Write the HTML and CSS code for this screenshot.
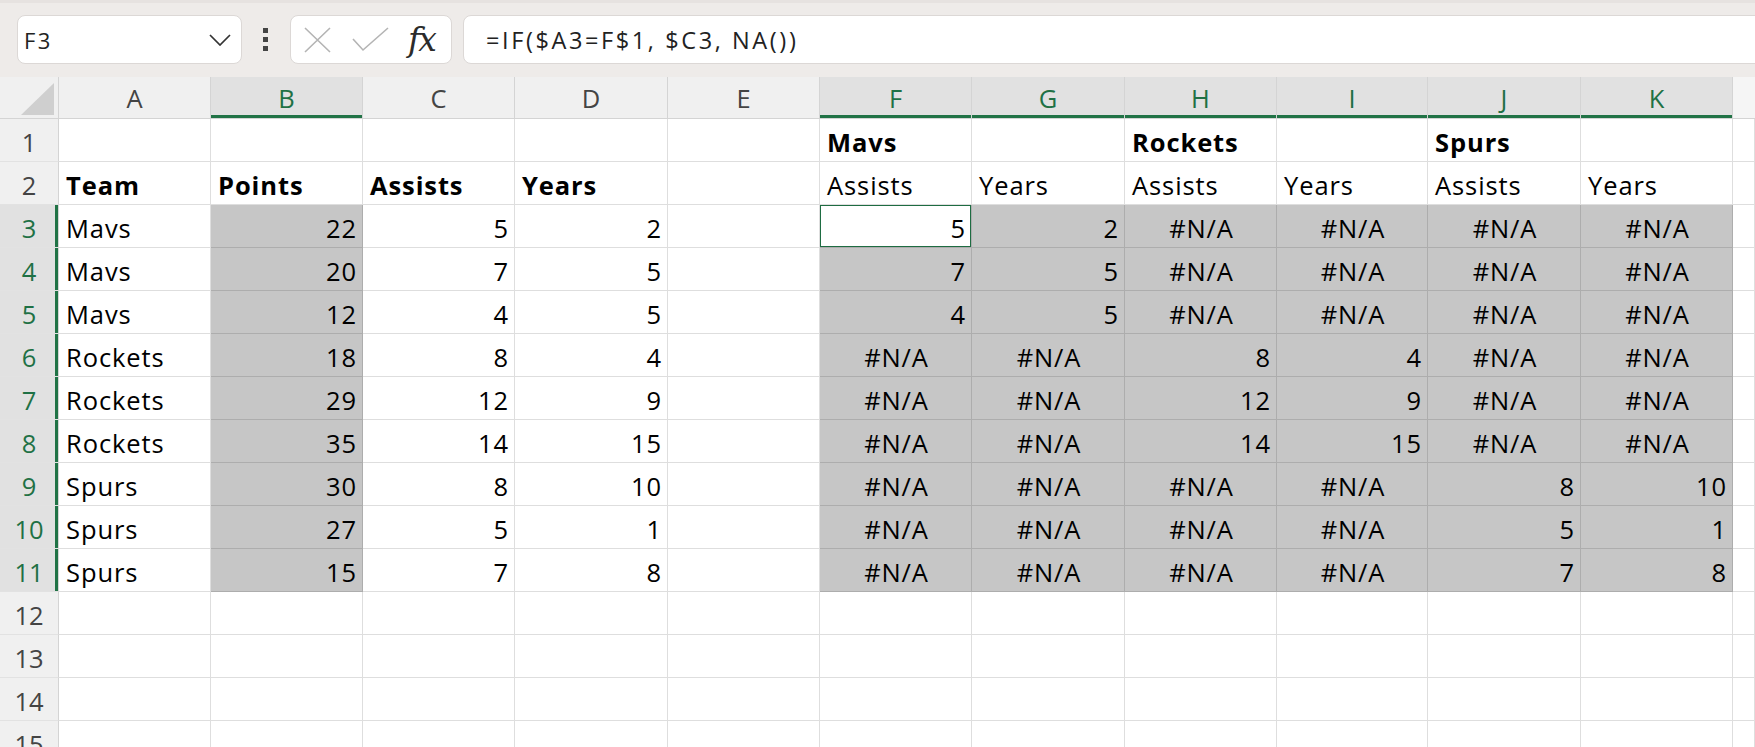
FILE: index.html
```html
<!DOCTYPE html>
<html lang="en">
<head>
    <meta charset="UTF-8">
    <title>Book1 - Excel</title>
    <link rel="stylesheet" href="styles.css">
</head>
<body>

    <!-- Formula bar -->
    <div class="toolbar">
        <div class="name-box">
            <span>F3</span>
            <svg class="chevron" width="22" height="12" viewBox="0 0 22 12">
                <polyline points="1,1 11,11 21,1" fill="none" stroke="#333" stroke-width="1.7"/>
            </svg>
        </div>
        <svg class="grip" width="6" height="24" viewBox="0 0 6 24">
            <rect x="0" y="0" width="5" height="5" fill="#444"/>
            <rect x="0" y="9" width="5" height="5" fill="#444"/>
            <rect x="0" y="18" width="5" height="5" fill="#444"/>
        </svg>
        <div class="fx-box">
            <svg width="27" height="26" viewBox="0 0 27 26">
                <path d="M1 1 L26 25 M26 1 L1 25" stroke="#b4b4b4" stroke-width="1.6" fill="none"/>
            </svg>
            <svg width="37" height="25" viewBox="0 0 37 25">
                <polyline points="1,12 11,23 36,1" fill="none" stroke="#b4b4b4" stroke-width="1.6"/>
            </svg>
            <span class="fx">fx</span>
        </div>
        <div class="formula">=IF($A3=F$1, $C3, NA())</div>
    </div>

    <!-- Sheet -->
    <table class="sheet">
        <colgroup>
            <col style="width:59px">
            <col style="width:152px">
            <col style="width:152px">
            <col style="width:152px">
            <col style="width:153px">
            <col style="width:152px">
            <col style="width:152px">
            <col style="width:153px">
            <col style="width:152px">
            <col style="width:151px">
            <col style="width:153px">
            <col style="width:152px">
            <col>
        </colgroup>
        <thead>
            <tr class="head">
                <th class="corner">
                    <svg width="36" height="34" viewBox="0 0 36 34"><polygon points="2,33 35,33 35,1" fill="#cfcfcf"/></svg>
                </th>
                <th>A</th>
                <th class="on">B</th>
                <th>C</th>
                <th>D</th>
                <th>E</th>
                <th class="on">F</th>
                <th class="on">G</th>
                <th class="on">H</th>
                <th class="on">I</th>
                <th class="on">J</th>
                <th class="on">K</th>
                <th class="rest"></th>
            </tr>
        </thead>
        <tbody>
            <tr>
                <th>1</th>
                <td></td><td></td><td></td><td></td><td></td>
                <td class="b">Mavs</td><td></td>
                <td class="b">Rockets</td><td></td>
                <td class="b">Spurs</td><td></td><td></td>
            </tr>
            <tr>
                <th>2</th>
                <td class="b">Team</td><td class="b">Points</td><td class="b">Assists</td><td class="b">Years</td><td></td>
                <td>Assists</td><td>Years</td><td>Assists</td><td>Years</td><td>Assists</td><td>Years</td><td></td>
            </tr>
            <tr>
                <th class="on">3</th>
                <td>Mavs</td><td class="n sel">22</td><td class="n">5</td><td class="n">2</td><td></td>
                <td class="n active">5</td><td class="n sel">2</td><td class="na sel">#N/A</td><td class="na sel">#N/A</td><td class="na sel">#N/A</td><td class="na sel">#N/A</td><td></td>
            </tr>
            <tr>
                <th class="on">4</th>
                <td>Mavs</td><td class="n sel">20</td><td class="n">7</td><td class="n">5</td><td></td>
                <td class="n sel">7</td><td class="n sel">5</td><td class="na sel">#N/A</td><td class="na sel">#N/A</td><td class="na sel">#N/A</td><td class="na sel">#N/A</td><td></td>
            </tr>
            <tr>
                <th class="on">5</th>
                <td>Mavs</td><td class="n sel">12</td><td class="n">4</td><td class="n">5</td><td></td>
                <td class="n sel">4</td><td class="n sel">5</td><td class="na sel">#N/A</td><td class="na sel">#N/A</td><td class="na sel">#N/A</td><td class="na sel">#N/A</td><td></td>
            </tr>
            <tr>
                <th class="on">6</th>
                <td>Rockets</td><td class="n sel">18</td><td class="n">8</td><td class="n">4</td><td></td>
                <td class="na sel">#N/A</td><td class="na sel">#N/A</td><td class="n sel">8</td><td class="n sel">4</td><td class="na sel">#N/A</td><td class="na sel">#N/A</td><td></td>
            </tr>
            <tr>
                <th class="on">7</th>
                <td>Rockets</td><td class="n sel">29</td><td class="n">12</td><td class="n">9</td><td></td>
                <td class="na sel">#N/A</td><td class="na sel">#N/A</td><td class="n sel">12</td><td class="n sel">9</td><td class="na sel">#N/A</td><td class="na sel">#N/A</td><td></td>
            </tr>
            <tr>
                <th class="on">8</th>
                <td>Rockets</td><td class="n sel">35</td><td class="n">14</td><td class="n">15</td><td></td>
                <td class="na sel">#N/A</td><td class="na sel">#N/A</td><td class="n sel">14</td><td class="n sel">15</td><td class="na sel">#N/A</td><td class="na sel">#N/A</td><td></td>
            </tr>
            <tr>
                <th class="on">9</th>
                <td>Spurs</td><td class="n sel">30</td><td class="n">8</td><td class="n">10</td><td></td>
                <td class="na sel">#N/A</td><td class="na sel">#N/A</td><td class="na sel">#N/A</td><td class="na sel">#N/A</td><td class="n sel">8</td><td class="n sel">10</td><td></td>
            </tr>
            <tr>
                <th class="on">10</th>
                <td>Spurs</td><td class="n sel">27</td><td class="n">5</td><td class="n">1</td><td></td>
                <td class="na sel">#N/A</td><td class="na sel">#N/A</td><td class="na sel">#N/A</td><td class="na sel">#N/A</td><td class="n sel">5</td><td class="n sel">1</td><td></td>
            </tr>
            <tr>
                <th class="on">11</th>
                <td>Spurs</td><td class="n sel">15</td><td class="n">7</td><td class="n">8</td><td></td>
                <td class="na sel">#N/A</td><td class="na sel">#N/A</td><td class="na sel">#N/A</td><td class="na sel">#N/A</td><td class="n sel">7</td><td class="n sel">8</td><td></td>
            </tr>
            <tr>
                <th>12</th>
                <td></td><td></td><td></td><td></td><td></td><td></td><td></td><td></td><td></td><td></td><td></td><td></td>
            </tr>
            <tr>
                <th>13</th>
                <td></td><td></td><td></td><td></td><td></td><td></td><td></td><td></td><td></td><td></td><td></td><td></td>
            </tr>
            <tr>
                <th>14</th>
                <td></td><td></td><td></td><td></td><td></td><td></td><td></td><td></td><td></td><td></td><td></td><td></td>
            </tr>
            <tr>
                <th>15</th>
                <td></td><td></td><td></td><td></td><td></td><td></td><td></td><td></td><td></td><td></td><td></td><td></td>
            </tr>
        </tbody>
    </table>

</body>
</html>
```

FILE: styles.css
```css
* {
    margin: 0;
    padding: 0;
    box-sizing: border-box;
}

body {
    width: 1755px;
    height: 747px;
    overflow: hidden;
    background: #fff;
    font-family: "Open Sans", "Noto Sans", sans-serif;
    color: #000;
}

/* Formula bar */
.toolbar {
    height: 77px;
    background: #eeebe9;
    border-top: 3px solid #e6e2e0;
    display: flex;
    align-items: center;
    padding-left: 17px;
    padding-bottom: 1px;
}

.name-box {
    width: 225px;
    height: 49px;
    background: #fff;
    border: 1px solid #dcd8d6;
    border-radius: 8px;
    display: flex;
    align-items: center;
    justify-content: space-between;
    padding: 0 10px 0 6px;
    font-size: 22px;
    letter-spacing: 2.5px;
    color: #222;
}

.grip {
    margin: 0 21px 0 21px;
}

.fx-box {
    width: 162px;
    height: 49px;
    background: #fff;
    border: 1px solid #dcd8d6;
    border-radius: 8px;
    display: flex;
    align-items: center;
    padding-left: 13px;
    gap: 21px;
}

.fx {
    font-family: "DejaVu Serif", "Liberation Serif", serif;
    font-style: italic;
    font-size: 33px;
    line-height: 1;
    color: #2b2b2b;
    margin-left: -2px;
    letter-spacing: -2px;
}

.formula {
    flex: 1;
    height: 49px;
    margin-left: 11px;
    margin-right: -12px;
    background: #fff;
    border: 1px solid #dcd8d6;
    border-radius: 8px 0 0 8px;
    display: flex;
    align-items: center;
    padding-left: 22px;
    font-size: 23.5px;
    letter-spacing: 2.6px;
    color: #222;
}

/* Sheet grid */
.sheet {
    width: 1755px;
    table-layout: fixed;
    border-collapse: separate;
    border-spacing: 0;
    font-size: 25.5px;
}

.sheet tr {
    height: 43px;
}

.sheet tr.head {
    height: 42px;
}

.sheet td {
    border-right: 1px solid #dedede;
    border-bottom: 1px solid #dedede;
    vertical-align: bottom;
    line-height: 34px;
    padding: 0 5px 2px 7px;
    letter-spacing: 0.9px;
    white-space: nowrap;
    overflow: hidden;
}

.sheet td.b {
    font-weight: bold;
}

.sheet td.n {
    text-align: right;
}

.sheet td.na {
    text-align: center;
}

.sheet td.sel {
    background: #c6c6c6;
    border-color: #adadad;
}

.sheet td.active {
    background: #fff;
    border-color: #adadad;
    box-shadow: inset 0 0 0 1px #1e6c42;
}

/* Headers */
.sheet thead th {
    background: #f0f0f0;
    color: #444;
    font-weight: normal;
    text-align: center;
    border-right: 1px solid #d4d4d4;
    border-bottom: 1px solid #d4d4d4;
    line-height: 34px;
}

.sheet thead th.on {
    background: #e1e1e1;
    color: #1f7145;
    box-shadow: inset 0 -3px 0 #217346;
}

.sheet thead th.rest {
    background: #f5f5f5;
    border-right: none;
}

.sheet thead th.corner {
    vertical-align: bottom;
    text-align: right;
    padding: 0 3px 2px 0;
    line-height: 0;
}

.sheet tbody th {
    background: #f0f0f0;
    color: #444;
    font-weight: normal;
    text-align: center;
    border-right: 1px solid #d4d4d4;
    border-bottom: 1px solid #e2e2e2;
    vertical-align: bottom;
    line-height: 34px;
    padding-bottom: 2px;
}

.sheet tbody th.on {
    background: #e1e1e1;
    color: #1f7145;
    box-shadow: inset -3px 0 0 #217346;
}
```
